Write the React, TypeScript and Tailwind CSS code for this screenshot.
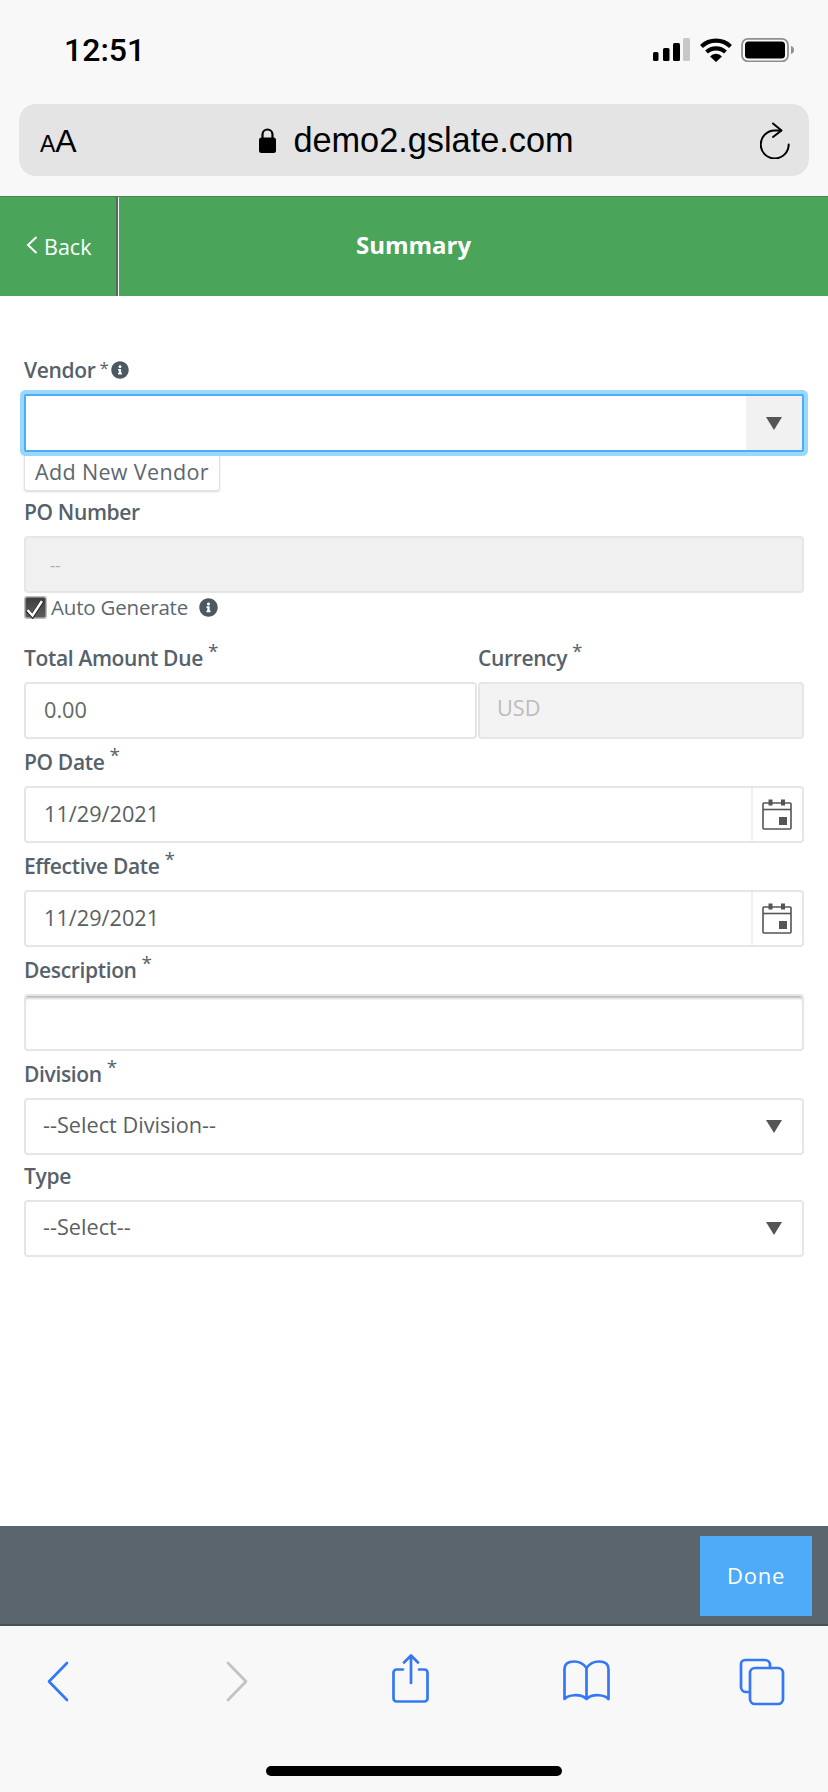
import { FaInfoCircle } from "react-icons/fa";

const Triangle = () => (
  <svg width="16" height="13" viewBox="0 0 16 13" className="text-[#555]">
    <path d="M0 0h16L8 13z" fill="currentColor" />
  </svg>
);

const CalendarIcon = () => (
  <svg width="30" height="31" viewBox="0 0 30 31" fill="none" className="text-[#555]">
    <path d="M2 4h26a1 1 0 0 1 1 1v24a1 1 0 0 1-1 1H2a1 1 0 0 1-1-1V5a1 1 0 0 1 1-1z" stroke="currentColor" strokeWidth="1.6" />
    <path d="M1 10.5h28" stroke="currentColor" strokeWidth="1.6" />
    <rect x="6.5" y="0.5" width="4" height="6" fill="currentColor" />
    <rect x="19" y="0.5" width="4" height="6" fill="currentColor" />
    <rect x="17" y="18" width="8" height="8" fill="currentColor" />
  </svg>
);

function Label({ text, required, className }: { text: string; required?: boolean; className: string }) {
  return (
    <div className={`flex items-end pb-[10px] text-[21px] leading-[28px] font-semibold tracking-[-0.35px] text-[#56616b] ${className}`}>
      <span>{text}</span>
      {required && <span className="relative -top-[7px] ml-[5px] text-[19px] leading-[28px] font-normal">*</span>}
    </div>
  );
}

function Box({ children, className = "" }: { children?: React.ReactNode; className?: string }) {
  return (
    <div className={`flex h-[57px] items-center rounded-[4px] border-2 border-[#e6e6e6] ${className}`}>
      {children}
    </div>
  );
}

function DateField({ value }: { value: string }) {
  return (
    <Box>
      <span className="-mt-[1px] flex-1 pl-[18px] text-[21.7px] text-[#5a5f62]">{value}</span>
      <div className="flex h-full w-[51px] items-center justify-center border-l-2 border-[#f0f0f0] pr-[1px]">
        <CalendarIcon />
      </div>
    </Box>
  );
}

function SelectField({ value }: { value: string }) {
  return (
    <Box>
      <span className="-mt-[3px] flex-1 pl-[17px] text-[21.7px] text-[#5a5f62]">{value}</span>
      <div className="pr-[20px]">
        <Triangle />
      </div>
    </Box>
  );
}

export default function App() {
  return (
    <div className="flex h-[1792px] w-[828px] flex-col overflow-hidden bg-white font-['Open_Sans',sans-serif]">
      {/* Safari top chrome */}
      <div className="h-[196px] bg-[#f8f8f8] font-['Liberation_Sans',sans-serif] text-black">
        <div className="flex h-[104px] items-start justify-between pl-[64px] pr-[34px] pt-[31px]">
          <span className="font-['Roboto',sans-serif] text-[32px] leading-[38px] font-medium">12:51</span>
          <svg width="141" height="24" viewBox="0 0 141 24" className="mt-[7px]">
            <rect x="0" y="14" width="5.500" height="9" rx="1.500" fill="#000" />
            <rect x="10" y="10" width="6.500" height="13" rx="1.500" fill="#000" />
            <rect x="20" y="5" width="7" height="18" rx="1.500" fill="#000" />
            <rect x="30" y="0" width="7" height="23" rx="1.500" fill="#c8c8c8" />
            <path d="M48.500 8.500a21 21 0 0 1 29 0" stroke="#000" strokeWidth="4.200" fill="none" />
            <path d="M53.500 14a14 14 0 0 1 19 0" stroke="#000" strokeWidth="4.200" fill="none" />
            <path d="M57 18.500a8 8 0 0 1 12 0L63 24z" fill="#000" />
            <rect x="89" y="0.900" width="46" height="22.500" rx="6" stroke="#8f8f8f" strokeWidth="1.800" fill="none" />
            <rect x="92" y="3.500" width="40" height="17" rx="3.500" fill="#000" />
            <path d="M138 8c2 .5 3 2 3 4s-1 3.500-3 4z" fill="#8f8f8f" />
          </svg>
        </div>
        <div className="relative mx-[19px] flex h-[72px] items-center justify-center rounded-[17px] bg-[#e4e4e4]">
          <div className="absolute left-[21px] top-[21px] flex items-baseline leading-none">
            <span className="text-[23px]">A</span>
            <span className="text-[32px]">A</span>
          </div>
          <div className="ml-[5px] flex items-center gap-[17px]">
            <svg width="17" height="25" viewBox="0 0 17 25">
              <path d="M3.500 10V6.500a5 5 0 0 1 10 0V10" stroke="#000" strokeWidth="2.200" fill="none" />
              <rect x="0" y="9.500" width="17" height="15.500" rx="2.500" fill="#000" />
            </svg>
            <span className="text-[34.3px] leading-[40px]">demo2.gslate.com</span>
          </div>
          <svg width="30" height="37" viewBox="0 0 30 37" fill="none" className="absolute right-[19px] top-[18px]">
            <path d="M21 8.500h-6.300a14 14 0 1 0 14 14" stroke="#000" strokeWidth="2" strokeLinecap="round" />
            <path d="M13 1.500l8.500 7-8.500 6.500" stroke="#000" strokeWidth="2" strokeLinecap="round" strokeLinejoin="round" />
          </svg>
        </div>
      </div>

      {/* Green title bar */}
      <div className="flex h-[100px] border-t border-[#3f8a4d] bg-[#4aa55b] text-white">
        <div className="flex w-[118px] items-center border-r-2 border-[#56695c] pl-[26px] pt-[1px]">
          <svg width="12" height="18" viewBox="0 0 12 18" fill="none" className="-mt-[4px]">
            <path d="M10.500 1L2 9l8.500 8" stroke="#fff" strokeWidth="2" />
          </svg>
          <span className="ml-[6px] text-[21.5px] leading-none">Back</span>
        </div>
        <div className="flex flex-1 items-center justify-center border-l border-[#f2f7f3] pr-[120px]">
          <span className="-mt-[4px] text-[24px] font-bold">Summary</span>
        </div>
      </div>

      {/* Form */}
      <div className="flex-1 px-[24px]">
        <div className="h-[98px]" />
        <div className="relative h-[58px] rounded-[2px] border-2 border-[#4dabf7] bg-white shadow-[0_0_0_4px_#97d8fb]">
          <div className="absolute right-0 top-0 flex h-full w-[56px] items-center justify-center bg-[#f1f1f1]">
            <Triangle />
          </div>
          <div className="absolute -left-[2px] -top-[40px] flex items-center text-[21px] leading-[28px] font-semibold tracking-[-0.35px] text-[#56616b]">
            Vendor
            <span className="-mt-[4px] ml-[4px] text-[17px] font-normal">*</span>
            <FaInfoCircle className="ml-[3px] h-[18px] w-[18px] text-[#4d5962]" />
          </div>
        </div>
        <div className="mt-px inline-flex h-[38px] items-center rounded-[3px] border border-[#e2e2e2] bg-white px-[10px] text-[21.5px] tracking-[0.35px] text-[#5b6770] shadow-[0_1px_2px_#00000026]">
          Add New Vendor
        </div>

        <Label text="PO Number" className="h-[45px]" />
        <Box className="bg-[#f0f0f0]">
          <span className="pl-[24px] text-[16px] text-[#aaaaaa]">--</span>
        </Box>
        <div className="mt-[3px] flex h-[23px] items-center text-[20.5px] tracking-[-0.2px] text-[#5b6770]">
          <svg width="23" height="23" viewBox="0 0 23 23" className="mr-[4px] shrink-0">
            <defs>
              <linearGradient id="check-bg" x1="0" y1="0" x2="0" y2="1">
                <stop offset="0" stopColor="#3d3d3d" />
                <stop offset="1" stopColor="#5e5e5e" />
              </linearGradient>
            </defs>
            <rect x="0.750" y="0.750" width="21.500" height="21.500" rx="2.500" fill="url(#check-bg)" stroke="#bdbdbd" strokeWidth="1.500" />
            <path d="M3 14l5.500 6L18.500 4.500" fill="none" stroke="#222" strokeWidth="4" />
            <path d="M3.500 14l5 5.500L18 5" fill="none" stroke="#fff" strokeWidth="2.500" />
          </svg>
          <span>Auto Generate</span>
          <FaInfoCircle className="ml-[11px] h-[19px] w-[19px] text-[#4d5962]" />
        </div>

        <div className="flex">
          <div className="w-[453px]">
            <Label text="Total Amount Due" required className="h-[63px]" />
            <Box>
              <span className="pl-[18px] text-[21.7px] text-[#5b6b5e]">0.00</span>
            </Box>
          </div>
          <div className="ml-px flex-1">
            <Label text="Currency" required className="h-[63px]" />
            <Box className="bg-[#f3f3f3]">
              <span className="-mt-[4px] pl-[17px] text-[21.7px] text-[#bcbcbc]">USD</span>
            </Box>
          </div>
        </div>

        <Label text="PO Date" required className="h-[47px]" />
        <DateField value="11/29/2021" />

        <Label text="Effective Date" required className="h-[47px]" />
        <DateField value="11/29/2021" />

        <Label text="Description" required className="h-[47px]" />
        <Box className="shadow-[inset_0_4px_3px_-2px_#0000004d]" />

        <Label text="Division" required className="h-[47px]" />
        <SelectField value="--Select Division--" />

        <Label text="Type" className="h-[45px]" />
        <SelectField value="--Select--" />
      </div>

      {/* Sticky action bar */}
      <div className="flex h-[100px] items-start justify-end border-b-2 border-[#4a5259] bg-[#5a656e] pr-[16px] pt-[10px]">
        <div className="flex h-[80px] w-[112px] items-center justify-center bg-[#4dabf7] pb-[2px] text-[22px] tracking-[0.8px] text-white">
          Done
        </div>
      </div>

      {/* Safari bottom chrome */}
      <div className="flex h-[166px] flex-col items-center bg-[#f8f8f8]">
        <div className="flex h-[140px] w-full items-start">
          <svg width="828" height="80" viewBox="0 0 828 80" fill="none" strokeWidth="2.700" strokeLinecap="round" strokeLinejoin="round" className="mt-[26px]">
            <path d="M67 11L49 29.500 67 48" stroke="#3478f6" />
            <path d="M228 11l18 18.500L228 48" stroke="#c2c2c2" />
            <g stroke="#3478f6">
              <path d="M403 17.500h-6.500a3 3 0 0 0-3 3v26a3 3 0 0 0 3 3h28a3 3 0 0 0 3-3v-26a3 3 0 0 0-3-3H419" />
              <path d="M411 31V3.500M404 10.500l7-7 7 7" />
              <path d="M586.500 16C583 11 579 9.500 574 9.500c-6 0-9.500 2.500-9.500 7.500v30c3.500-4 15.500-6 22-0 6.500-6 18.500-4 22 0V17c0-5-3.500-7.500-9.500-7.500-5 0-9 1.500-12.500 6.500V47" />
              <path d="M749 40h-3a5 5 0 0 1-5-5V12a4 4 0 0 1 4-4h20a5 5 0 0 1 5 5v3" />
              <rect x="750" y="16" width="33" height="36" rx="5" />
            </g>
          </svg>
        </div>
        <div className="h-[10px] w-[296px] rounded-full bg-black" />
      </div>
    </div>
  );
}
